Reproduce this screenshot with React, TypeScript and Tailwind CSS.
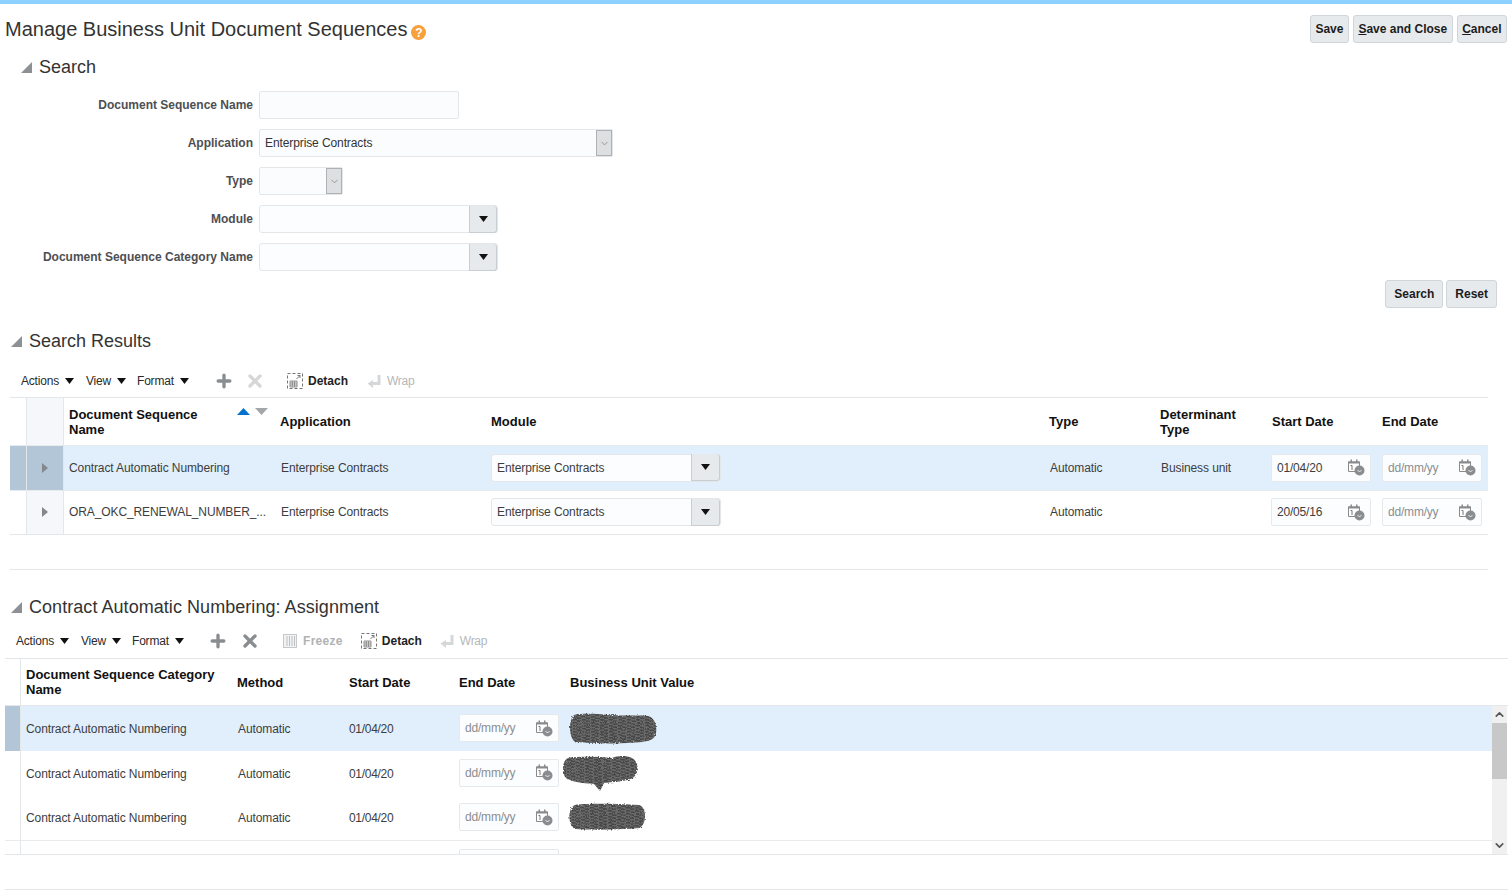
import { ChevronDown, ChevronUp, Plus, X } from 'lucide-react';

const font = 'font-["Liberation_Sans",Arial,sans-serif]';

function Caret({ className = '' }: { className?: string }) {
  return (
    <svg width="9" height="6" viewBox="0 0 9 6" className={className}>
      <path d="M0 0H9L4.5 6Z" fill="#111" />
    </svg>
  );
}

function SectionTriangle() {
  return (
    <svg width="11" height="11" viewBox="0 0 11 11">
      <path d="M11 0V11H0Z" fill="#8d9094" />
    </svg>
  );
}

function Help() {
  return (
    <span className="ml-[4px] mt-[9px] flex h-[15px] w-[15px] items-center justify-center rounded-full bg-[#f6a13c] text-[12px] font-bold leading-none text-white">
      ?
    </span>
  );
}

function Btn({ children }: { children: React.ReactNode }) {
  return (
    <button className="h-[28px] rounded-[3px] border border-[#d0d5da] bg-[#e7eaec] px-[4.5px] text-[12px] font-bold text-[#1c1c1c]">
      {children}
    </button>
  );
}

function FormRow({ label, children }: { label: string; children: React.ReactNode }) {
  return (
    <div className="flex h-[38px] items-center">
      <div className="w-[253px] text-right text-[12px] font-bold text-[#4d4f53]">{label}</div>
      <div className="ml-[6px]">{children}</div>
    </div>
  );
}

function NativeSelect({ width, value }: { width: string; value?: string }) {
  return (
    <div className={`flex h-[28px] ${width} items-center justify-between rounded-[2px] border border-[#e3e7ea] bg-[#fbfcfe]`}>
      <span className="pl-[5px] text-[12px] tracking-[-0.1px] text-[#333]">{value}</span>
      <span className="flex h-[26px] w-[16px] items-center justify-center border border-[#aeb2b5] bg-[#dedfe0]">
        <ChevronDown size={11} strokeWidth={1.5} color="#777" />
      </span>
    </div>
  );
}

function ComboBox({ width, value, btn = 'w-[28px]' }: { width: string; value?: string; btn?: string }) {
  return (
    <div className={`flex h-[28px] ${width} items-center justify-between rounded-[3px] border border-[#e3e7ea] bg-[#fcfdfe]`}>
      <span className="pl-[5px] text-[12px] tracking-[-0.1px] text-[#3d3d3d]">{value}</span>
      <span className={`flex h-[27px] ${btn} items-center justify-center rounded-r-[3px] border-b border-l border-r border-[#c9ced2] bg-[#e7eaec]`}>
        <Caret />
      </span>
    </div>
  );
}

function CalendarIcon() {
  return (
    <svg width="17" height="17" viewBox="0 0 17 17">
      <path d="M0.5 3H11.5V12.5H0.5Z" fill="#fff" stroke="#8a8a8a" strokeWidth="1" />
      <path d="M0 2.5H12V4.5H0Z" fill="#8a8a8a" />
      <rect x="2.5" y="0.5" width="1.5" height="3" fill="#8a8a8a" />
      <rect x="8" y="0.5" width="1.5" height="3" fill="#8a8a8a" />
      <path d="M2.5 6.5H4V11" fill="none" stroke="#777" strokeWidth="1" />
      <circle cx="11.5" cy="11.5" r="5" fill="#8a8d90" />
      <path d="M9.5 11.5L11.5 12.5L13.5 11.5" fill="none" stroke="#fff" strokeWidth="0.8" />
    </svg>
  );
}

function DateBox({ value, width = 'w-[100px]' }: { value?: string; width?: string }) {
  return (
    <div className={`flex h-[28px] ${width} items-center justify-between rounded-[2px] border border-[#e6e9ec] bg-[#fcfdfe] pl-[5px] pr-[5px]`}>
      <span className={`text-[12px] tracking-[-0.2px] ${value ? 'text-[#3d3d3d]' : 'text-[#8b8e92]'}`}>{value ?? 'dd/mm/yy'}</span>
      <CalendarIcon />
    </div>
  );
}

function DetachIcon() {
  return (
    <svg width="16" height="16" viewBox="0 0 16 16">
      <rect x="0.5" y="0.5" width="15" height="15" fill="none" stroke="#777" strokeWidth="1" strokeDasharray="3 2" />
      <path d="M3 8H10V14H3ZM3 10H10M3 12H10M5.3 8V14M7.6 8V14" fill="none" stroke="#777" strokeWidth="0.8" />
      <path d="M9.5 6L13 2.5M10.5 2.5H13V5" fill="none" stroke="#777" strokeWidth="1" />
    </svg>
  );
}

function WrapIcon() {
  return (
    <svg width="14" height="14" viewBox="0 0 14 14">
      <path d="M10.5 1H13.5V11H6V14L0.5 9.5L6 6V8H10.5Z" fill="#d5d7d9" />
    </svg>
  );
}

function FreezeIcon() {
  return (
    <svg width="14" height="14" viewBox="0 0 14 14">
      <rect x="0.5" y="0.5" width="13" height="13" fill="#f1f2f3" stroke="#c6c8ca" />
      <path d="M4 2V12M6.5 2V12M9 2V12M11.5 2V12" stroke="#bfc1c3" strokeWidth="1" />
    </svg>
  );
}

function MenuItem({ label, width }: { label: string; width: string }) {
  return (
    <span className={`flex ${width} items-center gap-[6px] text-[12px] tracking-[-0.2px] text-[#2a2a2a]`}>
      {label}
      <Caret />
    </span>
  );
}

function Blob({ d, width }: { d: string; width: number }) {
  const id = `scribble-${width}`;
  return (
    <svg width={width} height="36" viewBox={`0 0 ${width} 36`}>
      <defs>
        <pattern id={`${id}-p`} width="9" height="3" patternUnits="userSpaceOnUse">
          <rect width="9" height="3" fill="#474747" />
          <path d="M0 0.8H5M4 2.2H9" stroke="#858585" strokeWidth="0.8" />
        </pattern>
        <filter id={`${id}-f`} x="-5%" y="-5%" width="110%" height="110%">
          <feTurbulence type="fractalNoise" baseFrequency="0.7" numOctaves="2" seed="4" />
          <feDisplacementMap in="SourceGraphic" scale="3" />
        </filter>
      </defs>
      <path d={d} fill={`url(#${id}-p)`} filter={`url(#${id}-f)`} />
    </svg>
  );
}

const resultRows = [
  { name: 'Contract Automatic Numbering', determinant: 'Business unit', start: '01/04/20', selected: true },
  { name: 'ORA_OKC_RENEWAL_NUMBER_...', determinant: '', start: '20/05/16', selected: false },
];

const assignBlobs = [
  { width: 90, pad: 'ml-[-2px]', d: 'M6 5C14 3 30 4 42 5C60 6 74 5 80 6C88 8 89 18 88 24C86 31 78 32 60 33C42 34 20 33 8 32C1 30 0 10 6 5Z' },
  { width: 78, pad: 'ml-[-8px] mt-[3px]', d: 'M6 2C18 0 38 1 50 2C54 0 64 -1 70 2C77 6 77 16 72 21C66 26 48 26 42 27L38 35L32 28C20 27 8 26 3 21C0 15 0 5 6 2Z' },
  { width: 82, pad: 'ml-[-3px] mt-[4px]', d: 'M8 4C20 2 50 3 72 4C80 6 80 24 72 27C50 29 22 29 8 28C1 25 0 7 8 4Z' },
];

export default function App() {
  return (
    <div className={`${font} h-[896px] w-[1512px] overflow-hidden bg-white text-[#333]`}>
      <div className="h-[4px] bg-[#8dd1ff]" />

      {/* Page header */}
      <div className="flex h-[44px] items-start justify-between pl-[5px] pr-[5px]">
        <div className="mt-[12px] flex items-start">
          <h1 className="text-[20px] leading-[26px] text-[#333]">Manage Business Unit Document Sequences</h1>
          <Help />
        </div>
        <div className="mt-[11px] flex gap-[4px]">
          <Btn>Save</Btn>
          <Btn><span className="underline">S</span>ave and Close</Btn>
          <Btn><span className="underline">C</span>ancel</Btn>
        </div>
      </div>

      {/* Search */}
      <div className="mt-[6px] flex h-[26px] items-center gap-[7px] pl-[21px]">
        <SectionTriangle />
        <h2 className="text-[18px] text-[#333]">Search</h2>
      </div>
      <div className="mt-[6px]">
        <FormRow label="Document Sequence Name">
          <div className="h-[28px] w-[200px] rounded-[2px] border border-[#e3e7ea] bg-[#fbfcfe]" />
        </FormRow>
        <FormRow label="Application">
          <NativeSelect width="w-[354px]" value="Enterprise Contracts" />
        </FormRow>
        <FormRow label="Type">
          <NativeSelect width="w-[84px]" />
        </FormRow>
        <FormRow label="Module">
          <ComboBox width="w-[239px]" />
        </FormRow>
        <FormRow label="Document Sequence Category Name">
          <ComboBox width="w-[239px]" />
        </FormRow>
      </div>
      <div className="mt-[4px] flex justify-end gap-[3px] pr-[15px]">
        <Btn><span className="px-[3.5px]">Search</span></Btn>
        <Btn><span className="px-[3.5px]">Reset</span></Btn>
      </div>

      {/* Search Results */}
      <div className="mt-[20px] flex h-[26px] items-center gap-[7px] pl-[11px]">
        <SectionTriangle />
        <h2 className="text-[18px] text-[#333]">Search Results</h2>
      </div>
      <div className="mt-[15px] flex h-[24px] items-center pl-[21px]">
        <MenuItem label="Actions" width="w-[65px]" />
        <MenuItem label="View" width="w-[51px]" />
        <MenuItem label="Format" width="w-[77px]" />
        <Plus size={20} strokeWidth={4} color="#8a8d90" className="mr-[11px]" />
        <X size={20} strokeWidth={4} color="#d5d7d9" className="mr-[22px]" />
        <DetachIcon />
        <span className="ml-[5px] text-[12px] font-bold text-[#222]">Detach</span>
        <span className="ml-[19px]"><WrapIcon /></span>
        <span className="ml-[6px] text-[12px] tracking-[-0.3px] text-[#b5b7b9]">Wrap</span>
      </div>

      <div className="ml-[10px] mt-[4px] w-[1478px] border-t border-[#e3e7ea]">
        <div className="flex h-[47px] items-center text-[13px] font-bold leading-[15px] text-[#111]">
          <div className="h-full w-[16px]" />
          <div className="h-full w-[38px] border-x border-[#e3e7ea] bg-[#f5f7fa]" />
          <div className="flex h-full w-[216px] pl-[5px]">
            <div className="mt-[9px] w-[168px] pr-[30px]">Document Sequence Name</div>
            <div className="mt-[10px] flex gap-[5px]">
              <svg width="13" height="7" viewBox="0 0 13 7"><path d="M6.5 0L13 7H0Z" fill="#0572ce" /></svg>
              <svg width="13" height="7" viewBox="0 0 13 7"><path d="M0 0H13L6.5 7Z" fill="#a4a7aa" /></svg>
            </div>
          </div>
          <div className="w-[211px]">Application</div>
          <div className="w-[558px]">Module</div>
          <div className="w-[111px]">Type</div>
          <div className="w-[112px] pr-[20px]">Determinant Type</div>
          <div className="w-[110px]">Start Date</div>
          <div>End Date</div>
        </div>
        {resultRows.map((row) => (
          <div
            key={row.name}
            className={`flex h-[44.5px] items-center border-t border-[#e8ebee] text-[12px] tracking-[-0.1px] text-[#3d3d3d] ${row.selected ? 'bg-[#e1effc]' : ''}`}
          >
            <div className={`h-full w-[16px] ${row.selected ? 'bg-[#b3c6d7]' : ''}`} />
            <div className={`flex h-full w-[38px] items-center justify-center border-x border-[#e3e7ea] ${row.selected ? 'bg-[#b3c6d7]' : 'bg-[#f5f7fa]'}`}>
              <svg width="6" height="10" viewBox="0 0 6 10"><path d="M0 0L6 5L0 10Z" fill="#85888b" /></svg>
            </div>
            <div className="w-[217px] pl-[5px]">{row.name}</div>
            <div className="w-[210px]">Enterprise Contracts</div>
            <div className="w-[559px]">
              <ComboBox width="w-[230px]" btn="w-[29px]" value="Enterprise Contracts" />
            </div>
            <div className="w-[111px]">Automatic</div>
            <div className="w-[110px]">{row.determinant}</div>
            <div className="w-[111px]"><DateBox value={row.start} /></div>
            <DateBox />
          </div>
        ))}
        <div className="border-t border-[#e3e7ea]" />
      </div>

      <div className="ml-[10px] mt-[34px] w-[1478px] border-t border-[#e3e7ea]" />

      {/* Assignment */}
      <div className="mt-[24px] flex h-[26px] items-center gap-[7px] pl-[11px]">
        <SectionTriangle />
        <h2 className="text-[18px] tracking-[0.05px] text-[#333]">Contract Automatic Numbering: Assignment</h2>
      </div>
      <div className="mt-[9px] flex h-[24px] items-center pl-[16px]">
        <MenuItem label="Actions" width="w-[65px]" />
        <MenuItem label="View" width="w-[51px]" />
        <MenuItem label="Format" width="w-[76px]" />
        <Plus size={20} strokeWidth={4} color="#8a8d90" className="mr-[12px]" />
        <X size={20} strokeWidth={4} color="#8a8d90" className="mr-[23px]" />
        <FreezeIcon />
        <span className="ml-[6px] text-[12px] font-bold tracking-[0.3px] text-[#b0b2b4]">Freeze</span>
        <span className="ml-[18px]"><DetachIcon /></span>
        <span className="ml-[5px] text-[12px] font-bold text-[#222]">Detach</span>
        <span className="ml-[18px]"><WrapIcon /></span>
        <span className="ml-[6px] text-[12px] tracking-[-0.3px] text-[#b5b7b9]">Wrap</span>
      </div>

      <div className="ml-[5px] mt-[5px] w-[1503px] border-t border-[#e3e7ea]">
        <div className="flex h-[47px] items-center border-b border-[#e3e7ea] text-[13px] font-bold leading-[15px] text-[#111]">
          <div className="h-full w-[16px] border-r border-[#e3e7ea]" />
          <div className="w-[216px] pl-[5px]">Document Sequence Category Name</div>
          <div className="w-[112px]">Method</div>
          <div className="w-[110px]">Start Date</div>
          <div className="w-[111px]">End Date</div>
          <div>Business Unit Value</div>
        </div>
        <div className="flex h-[149px] overflow-hidden border-b border-[#e3e7ea]">
          <div className="w-[1487px]">
            {assignBlobs.map((blob, i) => (
              <div
                key={i}
                className={`flex h-[44.5px] items-center text-[12px] tracking-[-0.1px] text-[#3d3d3d] ${i === 0 ? 'bg-[#e1effc]' : ''}`}
              >
                <div className={`h-full w-[16px] border-r border-[#e3e7ea] ${i === 0 ? 'bg-[#b3c6d7]' : ''}`} />
                <div className="w-[217px] pl-[5px] pt-[2px]">Contract Automatic Numbering</div>
                <div className="w-[111px] pt-[2px]">Automatic</div>
                <div className="w-[110px] pt-[2px] tracking-[-0.3px]">01/04/20</div>
                <div className="w-[111px]"><DateBox width="w-[100px]" /></div>
                <div className={blob.pad}><Blob d={blob.d} width={blob.width} /></div>
              </div>
            ))}
            <div className="flex h-[15px] border-t border-[#e8ebee]">
              <div className="h-full w-[16px] border-r border-[#e3e7ea]" />
              <div className="ml-[438px] mt-[8px] h-[10px] w-[100px] rounded-t-[2px] border border-[#e6e9ec] bg-[#fcfdfe]" />
            </div>
          </div>
          <div className="flex w-[15px] flex-col items-center bg-[#f0f0f0]">
            <ChevronUp size={13} strokeWidth={3} color="#555" className="my-[2px]" />
            <div className="h-[56px] w-full bg-[#c8c8c8]" />
            <div className="flex-1" />
            <ChevronDown size={13} strokeWidth={3} color="#555" className="mb-[2px]" />
          </div>
        </div>
      </div>

      <div className="ml-[5px] mt-[34px] w-[1503px] border-t border-[#e3e7ea]" />
    </div>
  );
}
